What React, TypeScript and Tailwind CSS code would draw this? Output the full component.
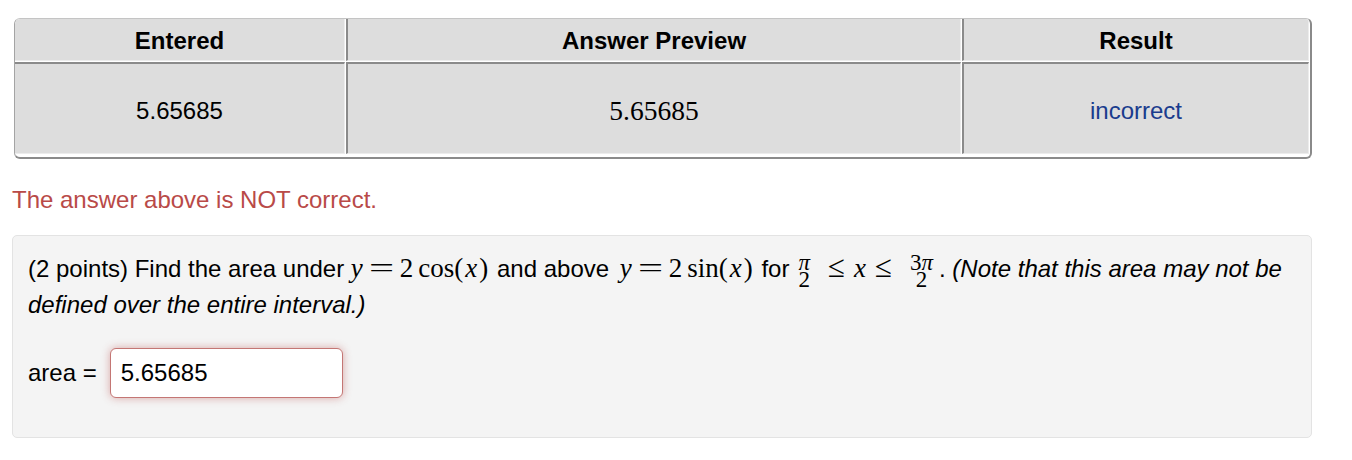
import React from 'react';

const sans = "font-['Liberation_Sans',Arial,sans-serif]";
const serif = "font-['Liberation_Serif','Times_New_Roman',serif]";

const headCell = "flex items-center justify-center border-r border-b border-[#ececec] bg-[#dddddd] pt-[3px] font-bold text-black";
const dataCell = "flex items-center justify-center border-t-2 border-r border-b border-t-[#8a8a8a] border-r-[#ececec] border-b-[#ececec] bg-[#dddddd] pt-[4px]";

function Eq() {
    return (
        <span className="mx-[6px] inline-block w-[25px] text-center">
            <span className="inline-block scale-x-[1.65]">=</span>
        </span>
    );
}

function Le() {
    return <span className="mx-[9px] inline-block text-[31px]">≤</span>;
}

function Frac({ top, bottom, className }: { top: React.ReactNode; bottom: React.ReactNode; className: string }) {
    return (
        <span className={`${serif} ${className} relative top-[1px] inline-flex flex-col items-center align-middle text-[23px]`}>
            <span className="leading-[16px]">{top}</span>
            <span className="leading-[17px]">{bottom}</span>
        </span>
    );
}

function Trig({ fn, className = '' }: { fn: string; className?: string }) {
    return (
        <span className={`${serif} ${className} mr-[2px] text-[27px] leading-none`}>
            <i>y</i>
            <Eq />
            2<span className="ml-[5px]">{fn}</span>(<i className="mx-[2px]">x</i>)
        </span>
    );
}

export default function App() {
    return (
        <div className={`${sans} min-h-[460px] bg-white text-[24px] text-black`}>
            <div className="ml-[14px] pt-[18px]">
                <div className="grid w-[1298px] grid-cols-[330px_615px_1fr] grid-rows-[42px_92px] gap-px overflow-hidden rounded-[6px] border-t border-l border-r-2 border-b-2 border-t-[#c4c4c4] border-l-[#a4a4a4] border-r-[#8a8a8a] border-b-[#8a8a8a] bg-white pr-px pb-[3px]">
                    <div className={headCell}>Entered</div>
                    <div className={`${headCell} border-l-2 border-l-[#8a8a8a]`}>Answer Preview</div>
                    <div className={`${headCell} border-l-2 border-l-[#8a8a8a]`}>Result</div>

                    <div className={dataCell}>5.65685</div>
                    <div className={`${dataCell} border-l-2 border-l-[#8a8a8a]`}>
                        <span className={`${serif} text-[27.5px]`}>5.65685</span>
                    </div>
                    <div className={`${dataCell} border-l-2 border-l-[#8a8a8a] bg-[#cc9191] text-[#1a3c8e]`}>incorrect</div>
                </div>
            </div>

            <p className="mt-[24px] ml-[12px] leading-[34px] text-[#b94a48]">The answer above is NOT correct.</p>

            <div className="mt-[18px] ml-[12px] w-[1300px] rounded-[5px] border border-[#e3e3e3] bg-[#f4f4f4] px-[15px] pt-[15px] pb-[39px]">
                <p className="leading-[36px]">
                    (2 points) Find the area under <Trig fn="cos" /> and above <Trig fn="sin" className="ml-[4px]" /> for
                    <Frac top={<i>π</i>} bottom="2" className="ml-[9px] mr-[9px]" />
                    <span className={`${serif} text-[27px] leading-none`}>
                        <Le />
                        <i>x</i>
                        <Le />
                    </span>
                    <Frac top={<>3<i>π</i></>} bottom="2" className="ml-[9px] mr-[6px]" />. <i>(Note that this area may not be defined over the entire interval.)</i>
                </p>

                <div className="mt-[25px] flex items-center gap-[13px]">
                    <label>area =</label>
                    <input
                        readOnly
                        value="5.65685"
                        className="h-[50px] w-[233px] rounded-[6px] border-[1.5px] border-[#c47674] bg-white px-[10px] text-[24px] text-black shadow-[0_0_8px_rgba(185,74,72,0.45)] outline-none"
                    />
                </div>
            </div>
        </div>
    );
}
